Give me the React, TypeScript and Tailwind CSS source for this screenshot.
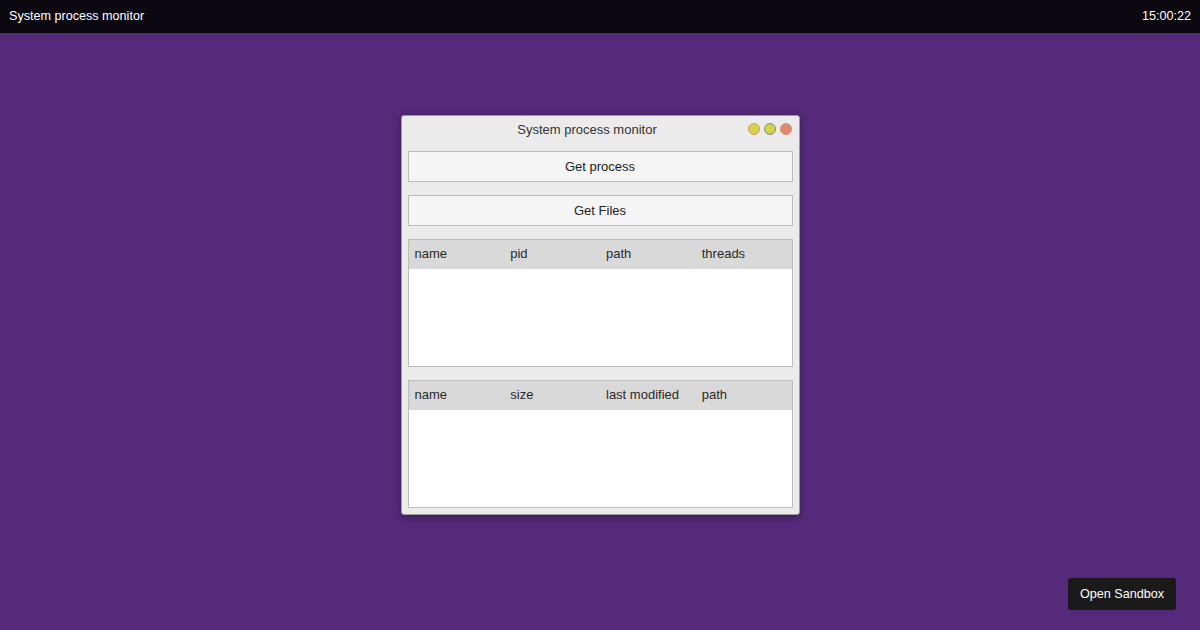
import React from 'react';

const font = { fontFamily: '"Liberation Sans", Arial, sans-serif' };

function Table({ cols }: { cols: string[] }) {
  return (
    <div className="flex h-[128px] flex-col border border-[#bdbdbd] bg-white">
      <div className="grid h-[29px] grid-cols-4 items-center bg-[#d9d9d9] pb-[2px] text-[13px] text-[#2a2a2a]">
        {cols.map((c) => (
          <span key={c} className="pl-[6px]">{c}</span>
        ))}
      </div>
      <div className="flex-1" />
    </div>
  );
}

export default function App() {
  return (
    <div className="flex h-[630px] w-[1200px] flex-col bg-[#562a7a]" style={font}>
      <div className="flex h-[33px] items-center justify-between bg-[#0b0810] px-[9px] text-[12.6px] text-white">
        <span>System process monitor</span>
        <span>15:00:22</span>
      </div>
      <div className="flex flex-1 flex-col items-center pt-[82px]">
        <div className="w-[399px] rounded-[3px] border border-[#9a9a9a] bg-[#ebebeb] px-[6px] pb-[6px] shadow-[0_2px_8px_rgba(0,0,0,0.35)]">
          <div className="relative flex h-[27px] items-center justify-center pr-[26px] text-[13px] text-[#333]">
            <span>System process monitor</span>
            <div className="absolute right-[1px] top-[7px] flex gap-[4px]">
              <span className="h-[12px] w-[12px] rounded-full border border-[#e0946a] bg-[#d2d34a]" />
              <span className="h-[12px] w-[12px] rounded-full border border-[#8a8a8a] bg-[#d2d34a]" />
              <span className="h-[12px] w-[12px] rounded-full border border-[#e08a70] bg-[#e08a70]" />
            </div>
          </div>
          <div className="mt-[8px] flex flex-col gap-[13px]">
            <button className="h-[31px] border border-[#bdbdbd] bg-[#f5f5f5] text-[13px] text-[#222]">Get process</button>
            <button className="h-[31px] border border-[#bdbdbd] bg-[#f5f5f5] text-[13px] text-[#222]">Get Files</button>
            <Table cols={['name', 'pid', 'path', 'threads']} />
            <Table cols={['name', 'size', 'last modified', 'path']} />
          </div>
        </div>
      </div>
      <div className="flex justify-end px-[24px] pb-[20px]">
        <button className="h-[32px] rounded-[3px] bg-[#1a1a1a] px-[12px] text-[12.6px] text-white">Open Sandbox</button>
      </div>
    </div>
  );
}
